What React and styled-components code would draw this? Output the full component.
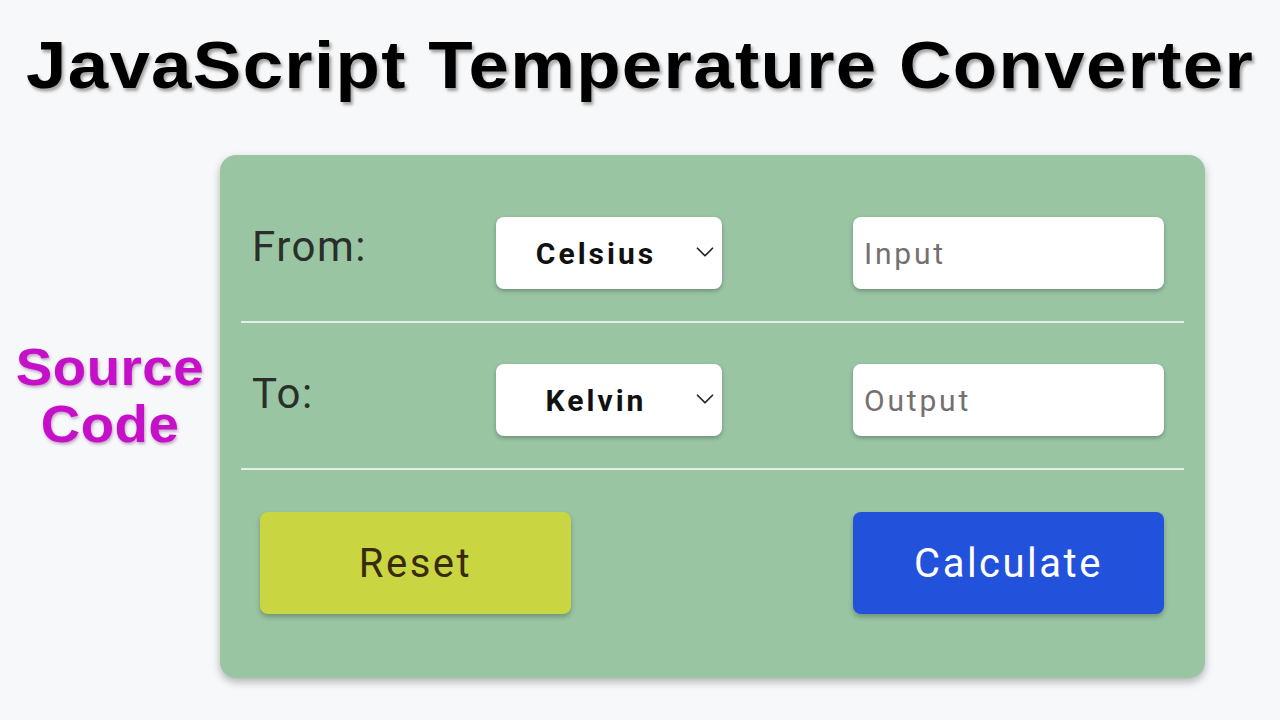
import React, { useState } from "react";
import styled, { createGlobalStyle } from "styled-components";
import { ChevronDown } from "lucide-react";

const GlobalStyle = createGlobalStyle`
  * { box-sizing: border-box; }
  body {
    margin: 0;
    background: #f7f8fa;
    font-family: Roboto, "Liberation Sans", sans-serif;
  }
`;

const Page = styled.div`
  width: 1280px;
  height: 720px;
  display: flex;
  flex-direction: column;
  overflow: hidden;
`;

const Title = styled.h1`
  margin: 0;
  padding-top: 27px;
  text-align: center;
  font-family: "Liberation Sans", Arial, sans-serif;
  font-weight: 700;
  font-size: 67px;
  line-height: 75px;
  letter-spacing: 1.2px;
  color: #000;
  text-shadow: 2px 3px 3px rgba(0, 0, 0, 0.35);
  transform: scaleX(1.085);
`;

const Main = styled.div`
  display: flex;
  margin-top: 53px;
`;

const Side = styled.div`
  width: 220px;
  padding-top: 184px;
  text-align: center;
  font-family: "Liberation Sans", Arial, sans-serif;
  font-weight: 700;
  font-size: 52px;
  line-height: 57px;
  letter-spacing: 0.5px;
  color: #c60fc9;
  text-shadow: 1px 2px 3px rgba(90, 0, 90, 0.35);
  transform: scaleX(1.05);
`;

const Card = styled.form`
  width: 985px;
  padding: 62px 21px 64px;
  background: #99c5a3;
  border-radius: 16px;
  box-shadow: 0 4px 8px rgba(0, 0, 0, 0.28);
`;

const Row = styled.div`
  display: flex;
  align-items: center;
  height: 72px;
  padding: 0 20px 0 11px;
  margin-top: ${(p) => p.$top || 0}px;
`;

const Label = styled.label`
  width: 244px;
  padding-bottom: 14px;
  font-size: 42px;
  letter-spacing: 1.5px;
  color: #2a2f2b;
`;

const SelectWrap = styled.div`
  position: relative;
  width: 226px;
  height: 72px;
`;

const Select = styled.select`
  appearance: none;
  width: 100%;
  height: 100%;
  border: none;
  border-radius: 8px;
  background: #fff;
  padding: 0 34px 0 8px;
  text-align: center;
  text-align-last: center;
  font-family: Roboto, sans-serif;
  font-weight: 700;
  font-size: 30px;
  letter-spacing: 3px;
  color: #111;
  box-shadow: 0 2px 4px rgba(0, 0, 0, 0.28);
  outline: none;
`;

const Chevron = styled(ChevronDown)`
  position: absolute;
  right: 2px;
  top: 20px;
  color: #222;
  pointer-events: none;
`;

const Field = styled.input`
  width: 311px;
  height: 72px;
  margin-left: 131px;
  border: none;
  border-radius: 8px;
  background: #fff;
  padding: 0 11px;
  font-family: Roboto, sans-serif;
  font-size: 30px;
  letter-spacing: 2.8px;
  color: #222;
  box-shadow: 0 2px 4px rgba(0, 0, 0, 0.28);
  outline: none;
  &::placeholder {
    color: #757070;
  }
`;

const Divider = styled.hr`
  margin: 32px 0 0;
  border: none;
  height: 2px;
  background: #e4eee5;
`;

const ButtonRow = styled.div`
  display: flex;
  justify-content: space-between;
  padding: 0 20px 0 19px;
  margin-top: 42px;
`;

const Button = styled.button`
  width: 311px;
  height: 102px;
  border: none;
  border-radius: 8px;
  background: ${(p) => (p.$primary ? "#2252dc" : "#c9d641")};
  color: ${(p) => (p.$primary ? "#fff" : "#3a2a0c")};
  font-family: Roboto, sans-serif;
  font-size: 40px;
  letter-spacing: 2.5px;
  box-shadow: 0 3px 5px rgba(0, 0, 0, 0.25);
  cursor: pointer;
`;

const units = ["Celsius", "Fahrenheit", "Kelvin"];

function convert(value, from, to) {
  let c = value;
  if (from === "Fahrenheit") c = ((value - 32) * 5) / 9;
  if (from === "Kelvin") c = value - 273.15;
  if (to === "Fahrenheit") return (c * 9) / 5 + 32;
  if (to === "Kelvin") return c + 273.15;
  return c;
}

export default function App() {
  const [from, setFrom] = useState("Celsius");
  const [to, setTo] = useState("Kelvin");
  const [input, setInput] = useState("");
  const [output, setOutput] = useState("");

  const calculate = (e) => {
    e.preventDefault();
    const v = parseFloat(input);
    if (isNaN(v)) return;
    setOutput(String(Math.round(convert(v, from, to) * 100) / 100));
  };

  const reset = () => {
    setInput("");
    setOutput("");
    setFrom("Celsius");
    setTo("Kelvin");
  };

  return (
    <Page>
      <GlobalStyle />
      <Title>JavaScript Temperature Converter</Title>
      <Main>
        <Side>
          Source
          <br />
          Code
        </Side>
        <Card onSubmit={calculate}>
          <Row>
            <Label>From:</Label>
            <SelectWrap>
              <Select value={from} onChange={(e) => setFrom(e.target.value)}>
                {units.map((u) => (
                  <option key={u}>{u}</option>
                ))}
              </Select>
              <Chevron size={30} strokeWidth={1.4} />
            </SelectWrap>
            <Field
              placeholder="Input"
              value={input}
              onChange={(e) => setInput(e.target.value)}
            />
          </Row>
          <Divider />
          <Row $top={41}>
            <Label>To:</Label>
            <SelectWrap>
              <Select value={to} onChange={(e) => setTo(e.target.value)}>
                {units.map((u) => (
                  <option key={u}>{u}</option>
                ))}
              </Select>
              <Chevron size={30} strokeWidth={1.4} />
            </SelectWrap>
            <Field placeholder="Output" value={output} readOnly />
          </Row>
          <Divider />
          <ButtonRow>
            <Button type="button" onClick={reset}>
              Reset
            </Button>
            <Button type="submit" $primary>
              Calculate
            </Button>
          </ButtonRow>
        </Card>
      </Main>
    </Page>
  );
}
